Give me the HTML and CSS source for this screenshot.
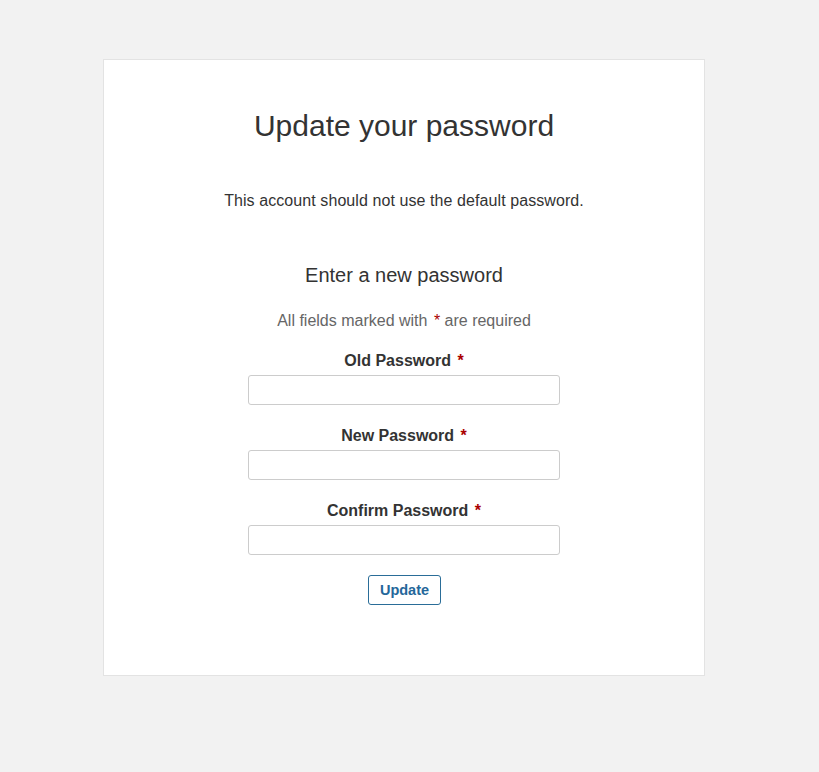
FILE: index.html
```html
<!DOCTYPE html>
<html lang="en">
<head>
<meta charset="utf-8">
<title>Update your password</title>
<link rel="stylesheet" href="styles.css">
</head>
<body>
<main class="card">
  <h1 class="title">Update your password</h1>
  <p class="intro">This account should not use the default password.</p>
  <h2 class="subtitle">Enter a new password</h2>
  <p class="note">All fields marked with <span class="req">*</span> are required</p>
  <form class="form">
    <div class="field">
      <label class="label" for="old">Old Password <span class="req">*</span></label>
      <input class="input" id="old" type="password">
    </div>
    <div class="field">
      <label class="label" for="new">New Password <span class="req">*</span></label>
      <input class="input" id="new" type="password">
    </div>
    <div class="field">
      <label class="label" for="confirm">Confirm Password <span class="req">*</span></label>
      <input class="input" id="confirm" type="password">
    </div>
    <button class="button" type="button">Update</button>
  </form>
</main>
</body>
</html>
```

FILE: styles.css
```css
html, body {
  margin: 0;
  padding: 0;
}
body {
  background: #f2f2f2;
  font-family: "Liberation Sans", Arial, sans-serif;
  color: #333;
  padding: 59px 0 0 103px;
}
.card {
  box-sizing: border-box;
  width: 602px;
  height: 617px;
  background: #fff;
  border: 1px solid #e3e3e3;
  padding: 48px 0 0;
  text-align: center;
}
.title {
  margin: 0;
  font-size: 30px;
  line-height: 36px;
  font-weight: normal;
  color: #333;
}
.intro {
  margin: 47px 0 0;
  font-size: 16px;
  line-height: 20px;
  letter-spacing: 0.08px;
  color: #333;
}
.subtitle {
  margin: 52px 0 0;
  font-size: 20px;
  line-height: 24px;
  font-weight: normal;
  color: #333;
}
.note {
  margin: 24px 0 0;
  font-size: 16px;
  line-height: 20px;
  color: #666;
}
.req {
  color: #a00;
  margin-left: 2px;
}
.form {
  margin-top: 20px;
  display: flex;
  flex-direction: column;
  align-items: center;
}
.field {
  display: flex;
  flex-direction: column;
  align-items: center;
  margin-bottom: 21px;
}
.label {
  font-size: 16px;
  line-height: 20px;
  font-weight: bold;
  color: #333;
  margin-bottom: 4px;
}
.input {
  box-sizing: border-box;
  width: 312px;
  height: 30px;
  margin: 0;
  border: 1px solid #cccccc;
  border-radius: 3px;
  background: #fff;
  padding: 4px 8px;
  font-family: inherit;
  font-size: 14px;
}
.button {
  box-sizing: border-box;
  height: 30px;
  margin: -1px 0 0 1px;
  padding: 1px 11px 0;
  background: #fff;
  border: 1px solid #2a6d98;
  border-radius: 3px;
  color: #24679a;
  font-family: "Liberation Sans", Arial, sans-serif;
  font-size: 14.5px;
  font-weight: bold;
  line-height: 27px;
}
```
